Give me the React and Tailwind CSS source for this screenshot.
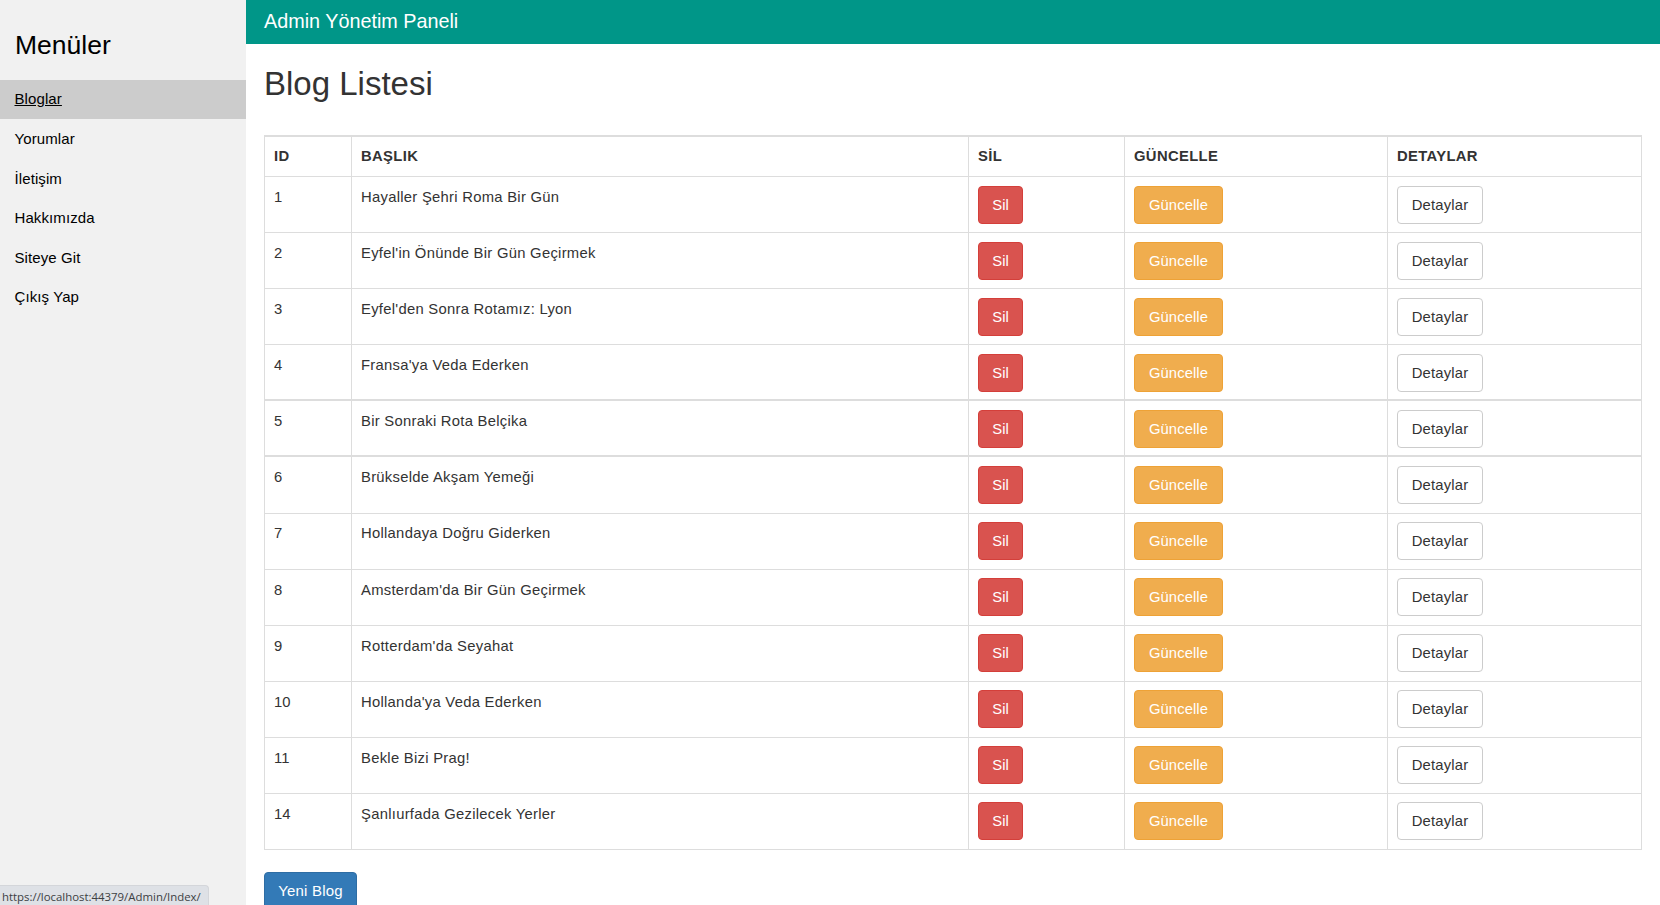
import React from "react";

const menu = ["Bloglar", "Yorumlar", "İletişim", "Hakkımızda", "Siteye Git", "Çıkış Yap"];

const blogs = [
  [1, "Hayaller Şehri Roma Bir Gün"],
  [2, "Eyfel'in Önünde Bir Gün Geçirmek"],
  [3, "Eyfel'den Sonra Rotamız: Lyon"],
  [4, "Fransa'ya Veda Ederken"],
  [5, "Bir Sonraki Rota Belçika"],
  [6, "Brükselde Akşam Yemeği"],
  [7, "Hollandaya Doğru Giderken"],
  [8, "Amsterdam'da Bir Gün Geçirmek"],
  [9, "Rotterdam'da Seyahat"],
  [10, "Hollanda'ya Veda Ederken"],
  [11, "Bekle Bizi Prag!"],
  [14, "Şanlıurfada Gezilecek Yerler"],
];

function App() {
  return (
    <div className="flex h-[905px] overflow-hidden bg-white font-['Liberation_Sans',Arial,sans-serif] text-[#333]">
      <aside className="w-[246px] shrink-0 bg-[#f1f1f1] text-black">
        <h3 className="pl-[15px] pt-[29px] h-[80px] text-[26.5px] leading-[33px]">Menüler</h3>
        <ul>
          {menu.map((item, i) => (
            <li key={item}>
              <a
                href="#"
                className={`block pl-[14.5px] text-[15px] tracking-[0.1px] ${
                  i === 0 ? "h-[39px] bg-[#cccccc] underline leading-[37.5px]" : "h-[39.6px] leading-[40px]"
                }`}
              >
                {item}
              </a>
            </li>
          ))}
        </ul>
      </aside>

      <main className="flex-1 min-w-0">
        <div className="h-[44px] bg-[#009688] pl-[18px] text-white text-[19.8px] leading-[42px]">
          Admin Yönetim Paneli
        </div>
        <div className="pl-[18px] pr-[18px]">
          <h2 className="mt-[18px] mb-[29px] text-[33px] leading-[44px] h-[44px]">Blog Listesi</h2>
          <table className="w-full table-fixed border-collapse text-[14.8px]">
            <colgroup>
              <col className="w-[87px]" />
              <col className="w-[617px]" />
              <col className="w-[156px]" />
              <col className="w-[263px]" />
              <col />
            </colgroup>
            <thead>
              <tr className="h-[40px] text-left border-t-2 border-[#ddd]">
                <th className="border-x border-b border-[#ddd] pl-[9px] pb-[1px] font-bold tracking-[0.35px]">ID</th>
                <th className="border-x border-b border-[#ddd] pl-[9px] pb-[1px] font-bold tracking-[0.35px]">BAŞLIK</th>
                <th className="border-x border-b border-[#ddd] pl-[9px] pb-[1px] font-bold tracking-[0.35px]">SİL</th>
                <th className="border-x border-b border-[#ddd] pl-[9px] pb-[1px] font-bold tracking-[0.35px]">GÜNCELLE</th>
                <th className="border-x border-b border-[#ddd] pl-[9px] pb-[1px] font-bold tracking-[0.35px]">DETAYLAR</th>
              </tr>
            </thead>
            <tbody>
              {blogs.map(([id, title]) => (
                <tr key={id} className={id === 6 ? "h-[57px]" : "h-[56px]"}>
                  <td className={`border border-[#ddd] pl-[9px] align-top ${id === 7 ? "pt-[8px]" : "pt-[9px]"} ${id === 4 || id === 5 ? "border-b-2" : ""}`}>{id}</td>
                  <td className={`border border-[#ddd] pl-[9px] align-top tracking-[0.28px] ${id === 7 ? "pt-[8px]" : "pt-[9px]"} ${id === 4 || id === 5 ? "border-b-2" : ""}`}>{title}</td>
                  <td className={`border border-[#ddd] pl-[9px] align-top ${id >= 7 ? "pt-[8px]" : "pt-[9px]"} ${id === 4 || id === 5 ? "border-b-2" : ""}`}>
                    <a href="#" className="inline-block h-[38px] w-[45px] rounded-[4px] border border-[#d43f3a] bg-[#d9534f] text-center leading-[36px] text-white">
                      Sil
                    </a>
                  </td>
                  <td className={`border border-[#ddd] pl-[9px] align-top ${id >= 7 ? "pt-[8px]" : "pt-[9px]"} ${id === 4 || id === 5 ? "border-b-2" : ""}`}>
                    <a href="#" className="inline-block h-[38px] w-[89px] rounded-[4px] border border-[#eea236] bg-[#f0ad4e] text-center tracking-[0.1px] leading-[36px] text-white">
                      Güncelle
                    </a>
                  </td>
                  <td className={`border border-[#ddd] pl-[9px] align-top ${id >= 7 ? "pt-[8px]" : "pt-[9px]"} ${id === 4 || id === 5 ? "border-b-2" : ""}`}>
                    <a href="#" className="inline-block h-[38px] w-[86px] rounded-[4px] border border-[#ccc] bg-white text-center tracking-[0.2px] leading-[36px] text-[#333]">
                      Detaylar
                    </a>
                  </td>
                </tr>
              ))}
            </tbody>
          </table>
          <a href="#" className="mt-[22px] inline-block h-[38px] w-[93px] rounded-[4px] border border-[#2e6da4] bg-[#337ab7] text-center text-[15px] tracking-[0.2px] leading-[36px] text-white">
            Yeni Blog
          </a>
        </div>
      </main>

      <div className="absolute left-0 bottom-0 h-[20px] w-[209px] rounded-tr-[4px] border-t border-r border-[#d4d6da] bg-[#dee1e6] pl-[2px] font-['Open_Sans',sans-serif] text-[11.4px] leading-[21px] text-[#3c4043]">
        https://localhost:44379/Admin/Index/
      </div>
    </div>
  );
}

export default App;
